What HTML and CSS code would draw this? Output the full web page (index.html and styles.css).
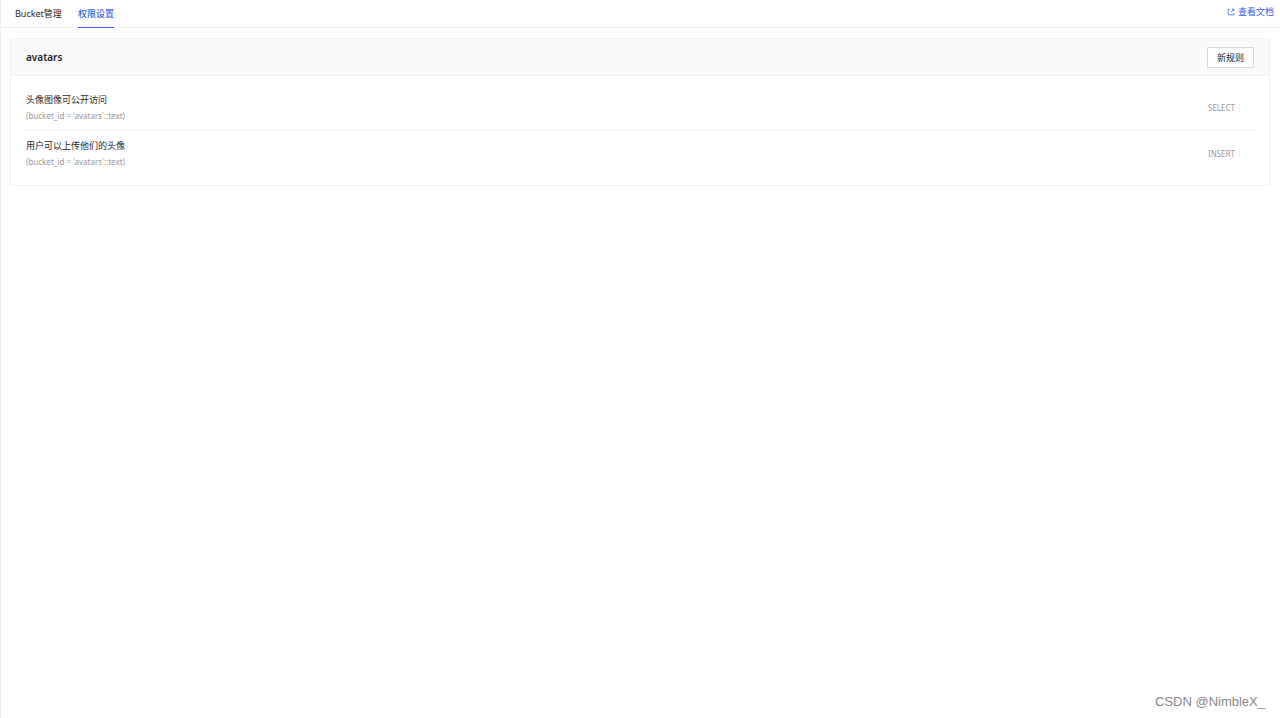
FILE: index.html
```html
<!DOCTYPE html>
<html lang="zh-CN">
<head>
  <meta charset="UTF-8">
  <title>权限设置</title>
  <link rel="stylesheet" href="styles.css">
</head>
<body>

  <!-- TOP BAR -->
  <header class="topbar">
    <nav class="tabs">
      <a class="tab" href="#bucket">Bucket管理</a>
      <a class="tab active" href="#policy">权限设置</a>
    </nav>
    <a class="doc-link" href="#docs">
      <svg class="doc-icon" viewBox="0 0 8 8" fill="none" stroke="currentColor" stroke-width="0.8">
        <path d="M3 1.2H1.2v5.6h5.6V5M4.8 1.2h2v2M6.6 1.4L3.8 4.2"/>
      </svg>
      查看文档
    </a>
  </header>

  <!-- POLICIES -->
  <main class="content">
    <section class="card">
      <div class="card-head">
        <h2>avatars</h2>
        <button type="button">新规则</button>
      </div>
      <ul class="rules">
        <li class="rule">
          <div>
            <h4>头像图像可公开访问</h4>
            <p>(bucket_id = 'avatars'::text)</p>
          </div>
          <span class="action">SELECT</span>
        </li>
        <li class="rule">
          <div>
            <h4>用户可以上传他们的头像</h4>
            <p>(bucket_id = 'avatars'::text)</p>
          </div>
          <span class="action">INSERT</span>
        </li>
      </ul>
    </section>
  </main>

  <footer class="credit">CSDN @NimbleX_</footer>

</body>
</html>
```

FILE: styles.css
```css
* {
  box-sizing: border-box;
}

body {
  display: flex;
  flex-direction: column;
  min-height: 100vh;
  margin: 0;
  border-left: 1px solid #f0f0f0;
  background: #fff;
  color: #262626;
  font-family: "Noto Sans", "Noto Sans CJK SC", sans-serif;
  font-size: 9px;
  line-height: 14px;
}

a {
  color: inherit;
  text-decoration: none;
}

.topbar {
  display: flex;
  justify-content: space-between;
  height: 28px;
  padding: 0 6px 0 14px;
  border-bottom: 1px solid #f0f0f0;
}

.tabs {
  display: flex;
  gap: 16px;
}

.tab {
  height: 28px;
  padding-top: 7px;
}

.tab.active {
  color: #3d5fe8;
  border-bottom: 1px solid #3d5fe8;
  font-weight: 500;
}

.doc-link {
  display: flex;
  align-items: center;
  gap: 3px;
  height: 24px;
  color: #3d5fe8;
}

.doc-icon {
  width: 8px;
  height: 8px;
}

.content {
  flex: 1;
  padding: 10px 10px 10px 9px;
}

.card {
  border: 1px solid #f0f0f0;
}

.card-head {
  display: flex;
  align-items: center;
  justify-content: space-between;
  height: 37px;
  padding: 0 15px;
  background: #fafafa;
  border-bottom: 1px solid #f0f0f0;
}

h2 {
  margin: 0;
  font-size: 10px;
  font-weight: 600;
}

button {
  height: 21px;
  padding: 0 9px;
  background: #fff;
  color: #262626;
  border: 1px solid #d9d9d9;
  border-radius: 1px;
  font-family: inherit;
  font-size: 9px;
  cursor: pointer;
}

.rules {
  margin: 0;
  padding: 10px 15px 9px;
  list-style: none;
}

.rule {
  display: flex;
  align-items: center;
  justify-content: space-between;
  padding: 7px 0;
}

.rule + .rule {
  padding-top: 8px;
  border-top: 1px solid #f0f0f0;
}

h4 {
  margin: 0 0 2px;
  font-size: 9px;
  font-weight: 400;
}

p {
  margin: 0;
  color: #999;
  font-size: 8px;
}

.action {
  display: flex;
  align-items: center;
  margin-right: 14px;
  color: #999;
  font-size: 8px;
}

.action::after {
  content: "";
  height: 8px;
  margin-left: 4px;
  border-right: 1px solid #f0f0f0;
}

.credit {
  padding: 0 15px 7px;
  color: #888;
  font-family: "Liberation Sans", Arial, sans-serif;
  font-size: 13px;
  line-height: 18px;
  text-align: right;
}
```
